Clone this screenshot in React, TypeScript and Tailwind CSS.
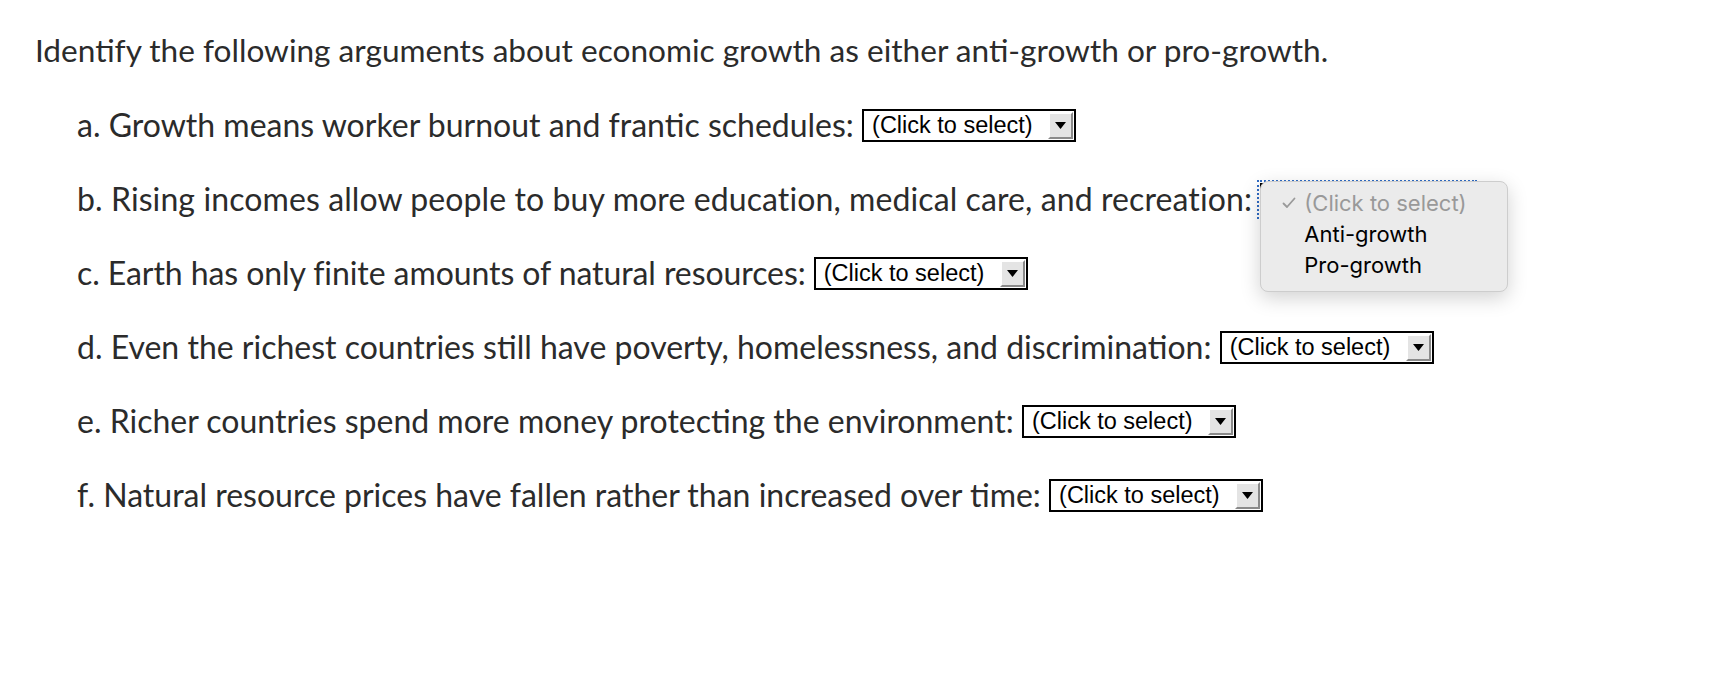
import React from "react";

function FakeSelect({ hideText = false }: { hideText?: boolean }) {
  return (
    <span className="inline-flex h-[33px] w-[214px] items-stretch border-2 border-black bg-white align-middle">
      <span
        className={`flex flex-1 items-center pl-[8px] pt-[2px] font-['Liberation_Sans',Arial,sans-serif] text-[23.5px] leading-none text-black ${
          hideText ? "invisible" : ""
        }`}
      >
        (Click to select)
      </span>
      <span className="my-[1px] mr-[1px] flex w-[25px] items-center justify-center border-t-2 border-l-2 border-r-2 border-b-2 border-t-white border-l-white border-r-[#8a8a8a] border-b-[#8a8a8a] bg-[#e4e4e4]">
        <svg width="11" height="7" viewBox="0 0 11 7">
          <polygon points="0,0 11,0 5.5,7" fill="#000" />
        </svg>
      </span>
    </span>
  );
}

function Row({ label, children, className = "" }: { label: string; children: React.ReactNode; className?: string }) {
  return (
    <div className="flex h-[74px] items-center pl-[77px]">
      <span className={`whitespace-pre ${className}`}>{label} </span>
      {children}
    </div>
  );
}

export default function App() {
  return (
    <div className="h-[696px] w-full bg-white pt-[14px] font-['Lato',sans-serif] text-[32px] text-[#2b2b2b]">
      <div className="flex h-[74px] items-center pl-[35px] text-[31.6px]">
        Identify the following arguments about economic growth as either anti-growth or pro-growth.
      </div>
      <Row label="a. Growth means worker burnout and frantic schedules:">
        <FakeSelect />
      </Row>
      <Row
        label="b. Rising incomes allow people to buy more education, medical care, and recreation:"
        className="tracking-[0.1px]"
      >
        <span className="relative inline-flex">
          <span className="inline-flex outline-2 outline-dotted outline-offset-[1px] outline-[#2f6bc4]">
            <FakeSelect hideText />
          </span>
          <div className="absolute left-0 top-[-2px] z-10 w-[248px] rounded-[8px] border border-[#cdcdcd] bg-[#ebebeb] pt-[6px] pb-[10px] font-['Inter',sans-serif] text-[22px] shadow-[0_6px_20px_rgba(0,0,0,0.18)]">
            <div className="flex h-[31px] items-center text-[#999999]">
              <span className="flex w-[43px] justify-end pr-[8px]">
                <svg width="14" height="12" viewBox="0 0 14 12">
                  <polyline points="1.5,6.5 5,10 12.5,1.5" fill="none" stroke="#9a9a9a" strokeWidth="1.8" strokeLinecap="round" strokeLinejoin="round" />
                </svg>
              </span>
              (Click to select)
            </div>
            <div className="flex h-[31px] items-center pl-[43px] text-black">Anti-growth</div>
            <div className="flex h-[31px] items-center pl-[43px] text-black">Pro-growth</div>
          </div>
        </span>
      </Row>
      <Row label="c. Earth has only finite amounts of natural resources:" className="tracking-[-0.08px]">
        <FakeSelect />
      </Row>
      <Row label="d. Even the richest countries still have poverty, homelessness, and discrimination:">
        <FakeSelect />
      </Row>
      <Row label="e. Richer countries spend more money protecting the environment:">
        <FakeSelect />
      </Row>
      <Row label="f. Natural resource prices have fallen rather than increased over time:">
        <FakeSelect />
      </Row>
    </div>
  );
}
